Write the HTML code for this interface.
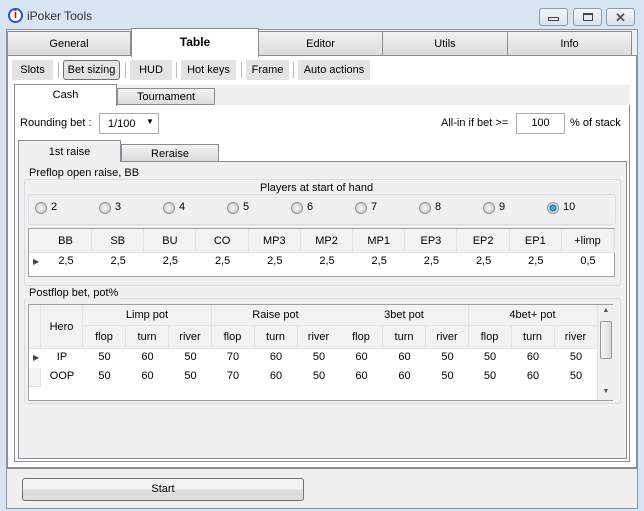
<!DOCTYPE html><html><head><style>
*{box-sizing:border-box;margin:0;padding:0}
body{width:644px;height:511px;position:relative;overflow:hidden;background:#d7e4f2;font-family:"Liberation Sans",sans-serif;font-size:11px;color:#000}
.a{position:absolute}
.c{position:absolute;text-align:center}
.tab{position:absolute;border:1px solid #898c95;background:linear-gradient(#f2f2f2,#dcdcdc);text-align:center}
.wb{position:absolute;top:8px;width:29px;height:18px;border:1px solid #8a9ab0;border-radius:3px;background:linear-gradient(#f3f6fa,#d9e2ee)}
.sb{position:absolute;top:60px;height:20px;background:#e3e3e3;line-height:20px;text-align:center}
.sep{position:absolute;top:62px;width:1px;height:16px;background:#bbb}
.radio{position:absolute;width:12px;height:12px;border-radius:50%;border:1px solid #8e8f8f;background:radial-gradient(#f4f4f4,#c9c9c9)}
.g{position:absolute;border:1px solid #d5dfe5;border-radius:3px}
.grid{position:absolute;border:1px solid #a0a0a0;background:#fff}
.h{position:absolute;background:#f2f2f2;border-right:1px solid #e4e4e4;border-bottom:1px solid #e4e4e4;text-align:center}
.d{position:absolute;text-align:center}
</style></head><body>
<div class="a" style="left:8px;top:8px;width:15px;height:15px;border-radius:50%;border:2px solid #2454c8;background:#fff;color:#d00;font-weight:bold;font-size:11px;text-align:center;line-height:11px">i</div>
<div class="a" style="left:27px;top:9px;font-size:12px;color:#333">iPoker Tools</div>
<div class="wb" style="left:539px"><div class="a" style="left:8px;top:8px;width:11px;height:4px;border:1px solid #444"></div></div>
<div class="wb" style="left:573px"><div class="a" style="left:9px;top:4px;width:10px;height:8px;border:1px solid #444;border-top-width:2px"></div></div>
<div class="wb" style="left:606px"><div class="c" style="left:0;top:1px;width:27px;font-size:13px;color:#555;font-weight:bold">✕</div></div>
<div class="a" style="left:6px;top:29px;width:632px;height:480px;background:#f0f0f0;border:1px solid #8a96a8"></div>
<div class="tab" style="left:7px;top:31px;width:124px;height:25px;line-height:25px">General</div>
<div class="tab" style="left:258px;top:31px;width:125px;height:25px;line-height:25px">Editor</div>
<div class="tab" style="left:382px;top:31px;width:126px;height:25px;line-height:25px">Utils</div>
<div class="tab" style="left:507px;top:31px;width:125px;height:25px;line-height:25px">Info</div>
<div class="a" style="left:7px;top:55px;width:630px;height:413px;background:#fff;border:1px solid #898c95"></div>
<div class="a" style="left:131px;top:28px;width:128px;height:29px;background:#fff;border:1px solid #898c95;border-bottom:none;text-align:center;line-height:27px;font-weight:bold;font-size:12px">Table</div>
<div class="sb" style="left:12px;width:41px">Slots</div>
<div class="sep" style="left:58px"></div>
<div class="sb" style="left:63px;width:57px;border:1px solid #707070;border-radius:3px;line-height:18px">Bet sizing</div>
<div class="sep" style="left:125px"></div>
<div class="sb" style="left:130px;width:42px">HUD</div>
<div class="sep" style="left:176px"></div>
<div class="sb" style="left:181px;width:55px">Hot keys</div>
<div class="sep" style="left:241px"></div>
<div class="sb" style="left:246px;width:43px">Frame</div>
<div class="sep" style="left:293px"></div>
<div class="sb" style="left:298px;width:72px">Auto actions</div>
<div class="a" style="left:14px;top:104px;width:616px;height:358px;background:#fff;border:1px solid #898c95"></div>
<div class="a" style="left:14px;top:85px;width:616px;height:20px;background:#f0f0f0"></div>
<div class="tab" style="left:117px;top:88px;width:98px;height:17px;line-height:17px">Tournament</div>
<div class="a" style="left:14px;top:84px;width:103px;height:22px;background:#fff;border:1px solid #898c95;border-bottom:none;text-align:center;line-height:20px">Cash</div>
<div class="a" style="left:20px;top:117px">Rounding bet :</div>
<div class="a" style="left:99px;top:113px;width:60px;height:21px;border:1px solid #abadb3;background:#fff;padding:4px 0 0 8px">1/100<span style="position:absolute;left:46px;top:3px;font-size:8px">▼</span></div>
<div class="a" style="left:441px;top:117px">All-in if bet &gt;=</div>
<div class="a" style="left:516px;top:113px;width:49px;height:21px;border:1px solid #abadb3;background:#fff;text-align:center;line-height:19px">100</div>
<div class="a" style="left:570px;top:117px">% of stack</div>
<div class="a" style="left:18px;top:161px;width:609px;height:298px;background:#f0f0f0;border:1px solid #898c95"></div>
<div class="tab" style="left:121px;top:144px;width:98px;height:18px;line-height:18px">Reraise</div>
<div class="a" style="left:18px;top:140px;width:103px;height:22px;background:#f0f0f0;border:1px solid #898c95;border-bottom:none;text-align:center;line-height:22px">1st raise</div>
<div class="g" style="left:24px;top:179px;width:597px;height:107px"></div>
<div class="a" style="left:27px;top:167px;background:#f0f0f0;padding:0 2px">Preflop open raise, BB</div>
<div class="g" style="left:28px;top:194px;width:588px;height:31px"></div>
<div class="a" style="left:256px;top:182px;background:#f0f0f0;padding:0 4px">Players at start of hand</div>
<div class="radio" style="left:35px;top:202px"></div><div class="a" style="left:51px;top:201px">2</div>
<div class="radio" style="left:99px;top:202px"></div><div class="a" style="left:115px;top:201px">3</div>
<div class="radio" style="left:163px;top:202px"></div><div class="a" style="left:179px;top:201px">4</div>
<div class="radio" style="left:227px;top:202px"></div><div class="a" style="left:243px;top:201px">5</div>
<div class="radio" style="left:291px;top:202px"></div><div class="a" style="left:307px;top:201px">6</div>
<div class="radio" style="left:355px;top:202px"></div><div class="a" style="left:371px;top:201px">7</div>
<div class="radio" style="left:419px;top:202px"></div><div class="a" style="left:435px;top:201px">8</div>
<div class="radio" style="left:483px;top:202px"></div><div class="a" style="left:499px;top:201px">9</div>
<div class="radio" style="left:547px;top:202px;background:radial-gradient(#3ab0f0 25%,#1a5f9a 45%,#dfe8ee 55%)"></div><div class="a" style="left:563px;top:201px">10</div>
<div class="grid" style="left:28px;top:228px;width:587px;height:49px">
<div class="h" style="left:0;top:0;width:12px;height:24px"></div>
<div class="h" style="left:12px;top:0;width:574px;height:24px"></div>
<div class="a" style="left:4px;top:28px;font-size:8px;color:#444">▶</div>
</div>
<div id="g1"></div>
<div class="g" style="left:24px;top:298px;width:597px;height:106px"></div>
<div class="a" style="left:27px;top:287px;background:#f0f0f0;padding:0 2px">Postflop bet, pot%</div>
<div class="grid" style="left:28px;top:304px;width:585px;height:97px">
<div class="h" style="left:0;top:0;width:12px;height:44px"></div>
<div class="h" style="left:12px;top:0;width:42px;height:44px;line-height:44px">Hero</div>
<div class="a" style="left:4px;top:48px;font-size:8px;color:#444">▶</div>
<div class="h" style="left:0;top:63px;width:12px;height:19px"></div>
<div class="a" style="left:568px;top:0;width:16px;height:95px;background:#f0f0f0;border-left:1px solid #e0e0e0"><div class="c" style="left:0;top:2px;width:16px;font-size:7px;color:#555">▲</div><div class="a" style="left:2px;top:16px;width:12px;height:38px;border:1px solid #999;border-radius:2px;background:linear-gradient(90deg,#f4f4f4,#dcdcdc)"></div><div class="c" style="left:0;top:83px;width:16px;font-size:7px;color:#555">▼</div></div>
</div>
<div id="g2"></div>
<div class="a" style="left:7px;top:468px;width:630px;height:1px;background:#898c95"></div>
<div class="a" style="left:22px;top:478px;width:282px;height:23px;border:1px solid #707070;border-radius:3px;background:linear-gradient(#f2f2f2 50%,#dddddd 50%);text-align:center;line-height:21px">Start</div>
<script>
var h=['BB','SB','BU','CO','MP3','MP2','MP1','EP3','EP2','EP1','+limp'],s='';
for(var i=0;i<11;i++){var x=40+i*52.2;s+='<div class="h" style="left:'+x+'px;top:229px;width:52px;height:24px;line-height:24px">'+h[i]+'</div><div class="d" style="left:'+x+'px;top:255px;width:52px">'+(i==10?'0,5':'2,5')+'</div>';}
document.getElementById('g1').innerHTML=s;
var g=['Limp pot','Raise pot','3bet pot','4bet+ pot'],ip=[50,60,50,70,60,50,60,60,50,50,60,50],op=ip;s='';
var st=['flop','turn','river'];
for(var k=0;k<4;k++){var x=83+k*128.5;s+='<div class="h" style="left:'+x+'px;top:305px;width:129px;height:21px;line-height:21px">'+g[k]+'</div>';
for(var j=0;j<3;j++){var xx=x+j*43;s+='<div class="h" style="left:'+xx+'px;top:326px;width:43px;height:23px;line-height:23px">'+st[j]+'</div><div class="d" style="left:'+xx+'px;top:351px;width:43px">'+ip[k*3+j]+'</div><div class="d" style="left:'+xx+'px;top:370px;width:43px">'+op[k*3+j]+'</div>';}}
s+='<div class="d" style="left:41px;top:351px;width:42px">IP</div><div class="d" style="left:41px;top:370px;width:42px">OOP</div>';
document.getElementById('g2').innerHTML=s;
</script>
</body></html>
